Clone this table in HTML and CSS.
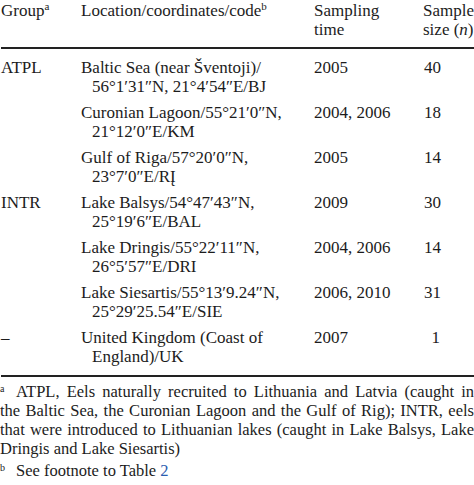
FILE: index.html
```html
<!DOCTYPE html>
<html lang="en">
<head>
<meta charset="utf-8">
<title>Eel sampling sites</title>
<link rel="stylesheet" href="styles.css">
</head>
<body>
<div class="page">
  <div class="sheet">
    <div class="row head">
      <div class="cell">Group<sup class="sup">a</sup></div>
      <div class="cell">Location/coordinates/code<sup class="sup">b</sup></div>
      <div class="cell">Sampling<br>time</div>
      <div class="cell">Sample<br>size (<i class="it">n</i>)</div>
    </div>
    <div class="rows">
      <div class="row first">
        <div class="cell">ATPL</div>
        <div class="cell loc">Baltic Sea (near Šventoji)/<br>56°1′31″N, 21°4′54″E/BJ</div>
        <div class="cell">2005</div>
        <div class="cell"><span class="num">40</span></div>
      </div>
      <div class="row">
        <div class="cell"></div>
        <div class="cell loc">Curonian Lagoon/55°21′0″N,<br>21°12′0″E/KM</div>
        <div class="cell">2004, 2006</div>
        <div class="cell"><span class="num">18</span></div>
      </div>
      <div class="row">
        <div class="cell"></div>
        <div class="cell loc">Gulf of Riga/57°20′0″N,<br>23°7′0″E/RĮ</div>
        <div class="cell">2005</div>
        <div class="cell"><span class="num">14</span></div>
      </div>
      <div class="row">
        <div class="cell">INTR</div>
        <div class="cell loc">Lake Balsys/54°47′43″N,<br>25°19′6″E/BAL</div>
        <div class="cell">2009</div>
        <div class="cell"><span class="num">30</span></div>
      </div>
      <div class="row">
        <div class="cell"></div>
        <div class="cell loc">Lake Dringis/55°22′11″N,<br>26°5′57″E/DRI</div>
        <div class="cell">2004, 2006</div>
        <div class="cell"><span class="num">14</span></div>
      </div>
      <div class="row">
        <div class="cell"></div>
        <div class="cell loc">Lake Siesartis/55°13′9.24″N,<br>25°29′25.54″E/SIE</div>
        <div class="cell">2006, 2010</div>
        <div class="cell"><span class="num">31</span></div>
      </div>
      <div class="row last">
        <div class="cell">–</div>
        <div class="cell loc">United Kingdom (Coast of<br>England)/UK</div>
        <div class="cell">2007</div>
        <div class="cell"><span class="num">1</span></div>
      </div>
    </div>
  </div>
  <div class="notes">
    <p class="note">
      <span class="jl"><sup class="fsup">a</sup>ATPL, Eels naturally recruited to Lithuania and Latvia (caught in</span>
      <span class="jl">the Baltic Sea, the Curonian Lagoon and the Gulf of Rig); INTR, eels</span>
      <span class="jl">that were introduced to Lithuanian lakes (caught in Lake Balsys, Lake</span>
      <span class="ll">Dringis and Lake Siesartis)</span>
    </p>
    <p class="note note-b"><sup class="fsup">b</sup>See footnote to Table <span class="ref">2</span></p>
  </div>
</div>
</body>
</html>
```
FILE: styles.css
```css
html, body {
  margin: 0;
  padding: 0;
  background: #ffffff;
}
body {
  width: 474px;
  height: 485px;
  overflow: hidden;
  color: #1c1c1c;
  font-family: "Liberation Serif", serif;
  font-size: 17px;
  line-height: 19px;
}
.page {
  width: 474px;
}
.sheet {
  width: 473px;
  margin-left: 1px;
  font-family: "Liberation Serif", serif;
  font-size: 17px;
  line-height: 19px;
}
.row {
  display: grid;
  grid-template-columns: 80px 233px 109px 51px;
  padding: 3px 0 4px;
}
.row.head {
  padding: 1px 0 8px;
  border-bottom: 2px solid #222;
}
.row.first {
  padding-top: 9px;
}
.row.last {
  padding-bottom: 9px;
}
.rows {
  border-bottom: 2px solid #222;
}
.cell {
  font-family: "Liberation Serif", serif;
  white-space: nowrap;
}
.cell.loc {
  padding-left: 11px;
  text-indent: -11px;
}
.num {
  display: inline-block;
  width: 16px;
  margin-left: 1px;
  text-align: right;
}
.it {
  font-style: italic;
}
.sup {
  font-size: 11px;
  line-height: 0;
  vertical-align: 6px;
}
.notes {
  margin-top: 5px;
  width: 474px;
  font-family: "Liberation Serif", serif;
  font-size: 16.5px;
  line-height: 19px;
}
.note {
  margin: 0;
}
.jl {
  display: block;
  text-align: justify;
  text-align-last: justify;
  white-space: nowrap;
}
.ll {
  display: block;
}
.fsup {
  display: inline-block;
  width: 16px;
  font-size: 10px;
  line-height: 0;
  vertical-align: 5px;
}
.note-b {
  margin-top: 3px;
}
.ref {
  color: #2a5db0;
}
```
